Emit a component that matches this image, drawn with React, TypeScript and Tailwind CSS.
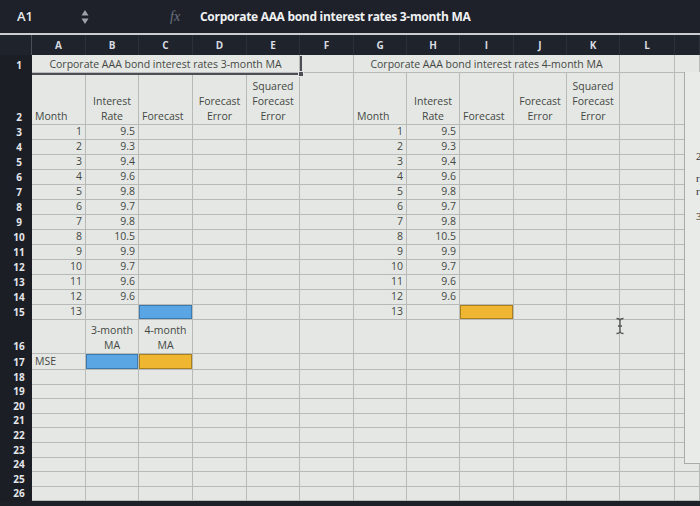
import React from "react";

const cols = ["A", "B", "C", "D", "E", "F", "G", "H", "I", "J", "K", "L", ""];
const vals = ["9.5", "9.3", "9.4", "9.6", "9.8", "9.7", "9.8", "10.5", "9.9", "9.7", "9.6", "9.6"];

type CellSpec = {
  text?: React.ReactNode;
  align?: "l" | "c" | "r";
  fill?: "blue" | "yellow";
  span?: number;
};

const G = "border-r border-b border-[#b7bab6]";

function Cell({ spec }: { spec: CellSpec }) {
  const al =
    spec.align === "r"
      ? "justify-end text-right pr-[3px]"
      : spec.align === "c"
      ? "justify-center text-center"
      : "justify-start pl-[3px]";
  let fill = "bg-[#e4e7e3]";
  if (spec.fill === "blue") fill = "bg-[#5aa5e4] shadow-[inset_0_0_0_1px_#3c79ad]";
  if (spec.fill === "yellow") fill = "bg-[#efb632] shadow-[inset_0_0_0_1px_#a8801f]";
  return (
    <div
      className={`${G} ${fill} flex items-end ${al} leading-[15px] text-[10.5px] text-[#454745] overflow-hidden whitespace-nowrap`}
      style={spec.span ? { gridColumn: `span ${spec.span} / span ${spec.span}` } : undefined}
    >
      {spec.text !== undefined && <div>{spec.text}</div>}
    </div>
  );
}

function lines(...t: string[]) {
  return (
    <>
      {t.map((s, i) => (
        <div key={i}>{s}</div>
      ))}
    </>
  );
}

function buildRow(r: number): CellSpec[] {
  const row: CellSpec[] = [];
  if (r === 1) {
    return [
      { text: "Corporate AAA bond interest rates 3-month MA", align: "c", span: 5 },
      {},
      { text: "Corporate AAA bond interest rates 4-month MA", align: "c", span: 5 },
      {},
      {},
    ];
  }
  for (let i = 0; i < 13; i++) row.push({});
  if (r === 2) {
    row[0] = { text: "Month", align: "l" };
    row[1] = { text: lines("Interest", "Rate"), align: "c" };
    row[2] = { text: "Forecast", align: "l" };
    row[3] = { text: lines("Forecast", "Error"), align: "c" };
    row[4] = { text: lines("Squared", "Forecast", "Error"), align: "c" };
    row[6] = { text: "Month", align: "l" };
    row[7] = { text: lines("Interest", "Rate"), align: "c" };
    row[8] = { text: "Forecast", align: "l" };
    row[9] = { text: lines("Forecast", "Error"), align: "c" };
    row[10] = { text: lines("Squared", "Forecast", "Error"), align: "c" };
  } else if (r >= 3 && r <= 15) {
    const m = r - 2;
    row[0] = { text: String(m), align: "r" };
    row[6] = { text: String(m), align: "r" };
    if (m <= 12) {
      row[1] = { text: vals[m - 1], align: "r" };
      row[7] = { text: vals[m - 1], align: "r" };
    }
    if (r === 15) {
      row[2] = { fill: "blue" };
      row[8] = { fill: "yellow" };
    }
  } else if (r === 16) {
    row[1] = { text: lines("3-month", "MA"), align: "c" };
    row[2] = { text: lines("4-month", "MA"), align: "c" };
  } else if (r === 17) {
    row[0] = { text: "MSE", align: "l" };
    row[1] = { fill: "blue" };
    row[2] = { fill: "yellow" };
  }
  return row;
}

export default function App() {
  const rows = Array.from({ length: 26 }, (_, i) => i + 1);
  return (
    <div
      className="relative w-[700px] h-[506px] overflow-hidden bg-[#1d2027]"
      style={{ fontFamily: "'Open Sans', 'Noto Sans', sans-serif" }}
    >
      {/* formula bar */}
      <div className="h-[35px] flex items-center bg-[#1e2129] border-b-[2px] border-[#c9ccd0]">
        <div className="w-[70px] pl-[17px] text-[13px] font-semibold text-[#e6e8ec]">A1</div>
        <div className="w-[30px] flex flex-col items-center">
          <svg width="8" height="16" viewBox="0 0 8 16">
            <path d="M4 1 L7.5 6.5 L0.5 6.5 Z" fill="#9da2ab" />
            <path d="M4 15 L7.5 9.5 L0.5 9.5 Z" fill="#9da2ab" />
          </svg>
        </div>
        <div className="w-[70px]" />
        <div
          className="w-[30px] text-[14px] italic text-[#6d7380]"
          style={{ fontFamily: "'Liberation Serif', serif" }}
        >
          fx
        </div>
        <div className="text-[12px] font-bold text-[#f0f1f3] tracking-[-0.3px]">
          Corporate AAA bond interest rates 3-month MA
        </div>
      </div>

      {/* grid */}
      <div className="grid grid-cols-[32px_54px_53px_54px_54px_53px_54px_53px_53px_54px_53px_53px_55px_1fr] grid-rows-[20px_18px_52px_repeat(13,15px)_34px_16px_repeat(9,14.6px)]">
        <div className="bg-[#1f232b] border-r border-[#4a4f58]" />
        {cols.map((c, i) => (
          <div
            key={i}
            className="bg-[#1f232b] border-r border-[#2c3038] flex items-center justify-center text-[10px] font-bold text-[#d9dce2]"
          >
            {c}
          </div>
        ))}
        {rows.map((r) => (
          <React.Fragment key={r}>
            <div className="bg-[#1b1e25] flex items-end justify-center pl-[6px] pb-[1px] text-[10px] font-bold text-[#e4e6ea] leading-[14px]">
              {r}
            </div>
            {buildRow(r).map((s, i) => (
              <Cell key={i} spec={s} />
            ))}
          </React.Fragment>
        ))}
      </div>

      {/* selection border on merged A1 */}
      <div className="absolute left-[32px] top-[56px] w-[270px] h-[19px] border-r-[2px] border-b-[2px] border-[#4b4f55] pointer-events-none" />
      <div className="absolute left-[298px] top-[71px] w-[6px] h-[6px] bg-[#4b4f55] border border-[#e4e7e3]" />

      {/* side panel overlay at right */}
      <div
        className="absolute left-[684px] top-[72px] w-[20px] h-[392px] bg-[#e9ebe8] border-l border-b border-[#a9aca8] text-[11px] text-[#333] leading-[15px]"
        style={{ fontFamily: "'Liberation Serif', serif" }}
      >
        <div className="absolute left-[11px] top-[77px]">2</div>
        <div className="absolute left-[11px] top-[99px]">r</div>
        <div className="absolute left-[11px] top-[112px]">r</div>
        <div className="absolute left-[11px] top-[137px]">3</div>
      </div>

      {/* I-beam cursor */}
      <svg className="absolute left-[615px] top-[317px]" width="10" height="18" viewBox="0 0 10 18">
        <path
          d="M1.5 1.5 Q5 1.5 5 4 Q5 1.5 8.5 1.5 M5 4 L5 14 M1.5 16.5 Q5 16.5 5 14 Q5 16.5 8.5 16.5 M3 9 L7 9"
          stroke="#555"
          strokeWidth="1.3"
          fill="none"
        />
      </svg>
    </div>
  );
}
